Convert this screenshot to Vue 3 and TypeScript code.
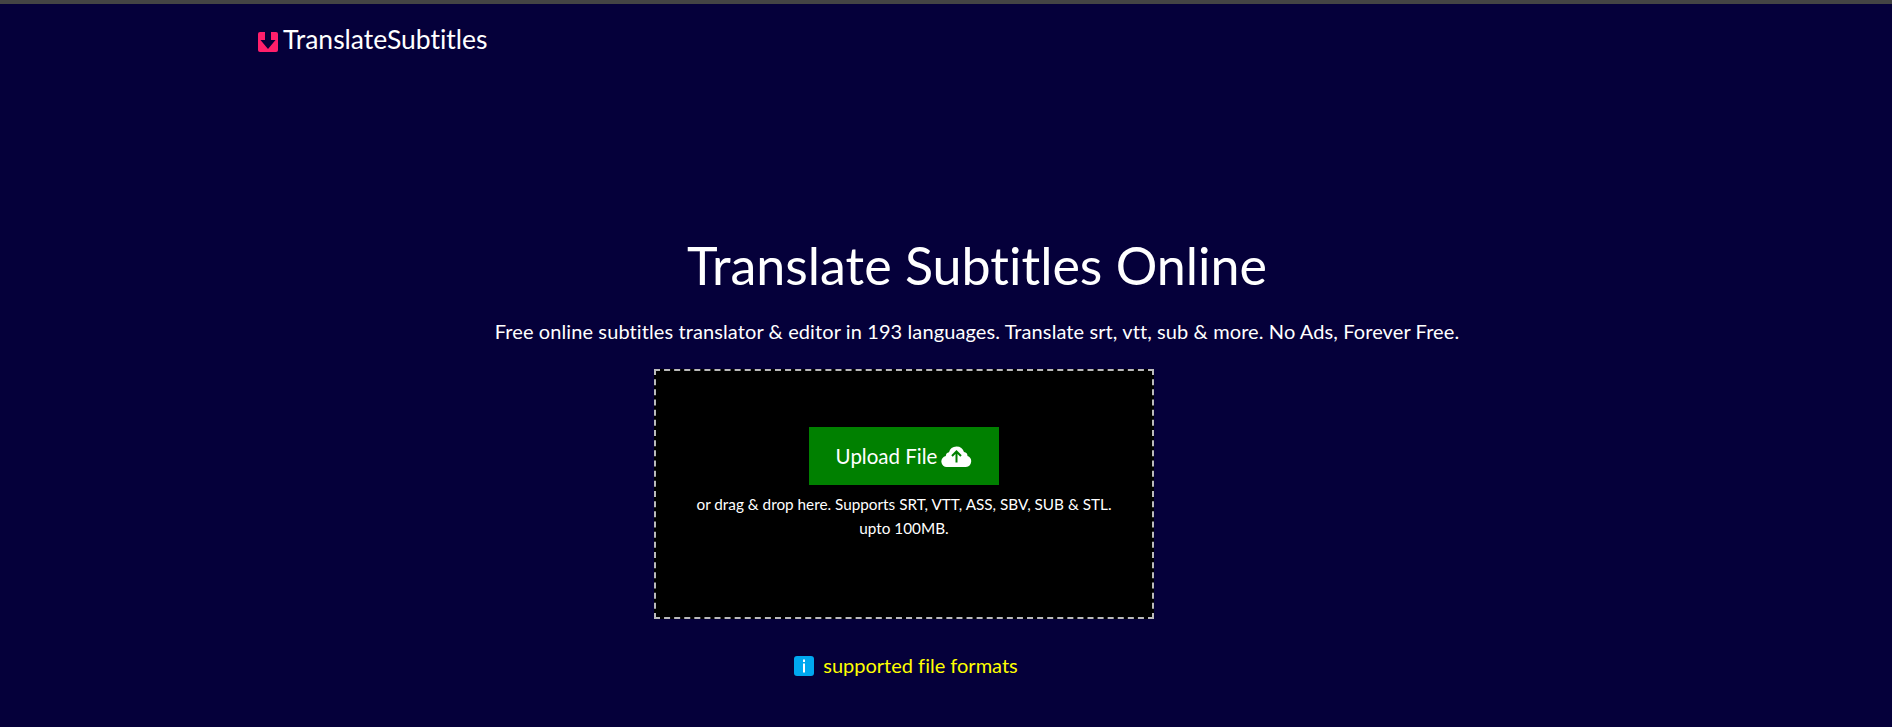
<script setup lang="ts">
const subtitle = 'Free online subtitles translator & editor in 193 languages. Translate srt, vtt, sub & more. No Ads, Forever Free.'
</script>

<template>
  <div class="page">
    <header class="topbar">
      <a class="brand" href="#">
        <svg class="brand-icon" viewBox="0 0 20 20" width="20" height="20" aria-hidden="true">
          <rect width="20" height="20" rx="2" fill="#ff1f6b" />
          <path d="M7 0h6v8h4.500L10 17 2.500 8H7z" fill="#05003a" />
        </svg>
        <span>TranslateSubtitles</span>
      </a>
    </header>

    <main class="hero">
      <h1>Translate Subtitles Online</h1>
      <p class="subtitle">{{ subtitle }}</p>

      <section class="dropzone">
        <button class="upload" type="button">
          <span>Upload File</span>
          <svg viewBox="0 0 31 21" width="31" height="21" aria-hidden="true">
            <path
              fill="#fff"
              d="M6 21A5.500 5.500 0 0 1 4.800 10.100 4 4 0 0 1 8 6.200 7.800 7.800 0 0 1 23 6 4 4 0 0 1 26.500 10 5.700 5.700 0 0 1 25 21z"
            />
            <path fill="none" stroke="#008000" stroke-width="2" d="M15.500 16.500V5.500M11 10l4.500-4.500 4.500 4.500" />
          </svg>
        </button>
        <p class="hint">or drag &amp; drop here. Supports SRT, VTT, ASS, SBV, SUB &amp; STL.</p>
        <p class="hint">upto 100MB.</p>
      </section>

      <a class="formats" href="#">
        <span class="info">
          <svg viewBox="0 0 20 20" width="20" height="20" aria-hidden="true">
            <rect width="20" height="20" rx="3" fill="#00a8f0" />
            <path d="M9 3.500h2v2.500H9zM9 7.500h2v9H9z" fill="#fff" />
          </svg>
        </span>
        <span>supported file formats</span>
      </a>
    </main>
  </div>
</template>

<style scoped>
.page {
  min-height: 727px;
  box-sizing: border-box;
  border-top: 4px solid #444;
  background: #05003a;
  color: #fff;
  font-family: Lato, 'Noto Sans', sans-serif;
  font-variant-ligatures: none;
}

.topbar {
  padding: 19px 0 0 258px;
}

.brand {
  display: inline-flex;
  align-items: center;
  gap: 5px;
  color: #fff;
  font-size: 26.5px;
  line-height: 32px;
  text-decoration: none;
}

.brand-icon {
  margin-top: 5px;
}

.hero {
  display: flex;
  flex-direction: column;
  align-items: center;
  padding-top: 178px;
  padding-left: 62px;
}

h1 {
  margin: 0;
  font-size: 52px;
  font-weight: 400;
  line-height: 64px;
}

.subtitle {
  margin: 21px 0 0;
  font-size: 20px;
  line-height: 27px;
  letter-spacing: 0.1px;
}

.dropzone {
  box-sizing: border-box;
  align-self: flex-start;
  width: 500px;
  height: 250px;
  margin: 24px 0 0 592px;
  padding-top: 56px;
  border: 2px dashed #bbb;
  background: #000;
  text-align: center;
}

.upload {
  display: inline-flex;
  align-items: center;
  justify-content: center;
  gap: 4px;
  width: 190px;
  height: 58px;
  margin-bottom: 7px;
  border: 0;
  background: #008000;
  color: #fff;
  font: inherit;
  font-size: 20.5px;
}

.hint {
  margin: 0;
  font-size: 15.3px;
  line-height: 24px;
}

.formats {
  display: flex;
  align-items: center;
  gap: 9px;
  margin: 33px 0 0 -142px;
  color: #ff0;
  font-size: 20px;
  line-height: 27px;
  text-decoration: none;
}

.info {
  display: inline-flex;
}
</style>

<style>
html,
body {
  margin: 0;
  background: #05003a;
}
</style>
